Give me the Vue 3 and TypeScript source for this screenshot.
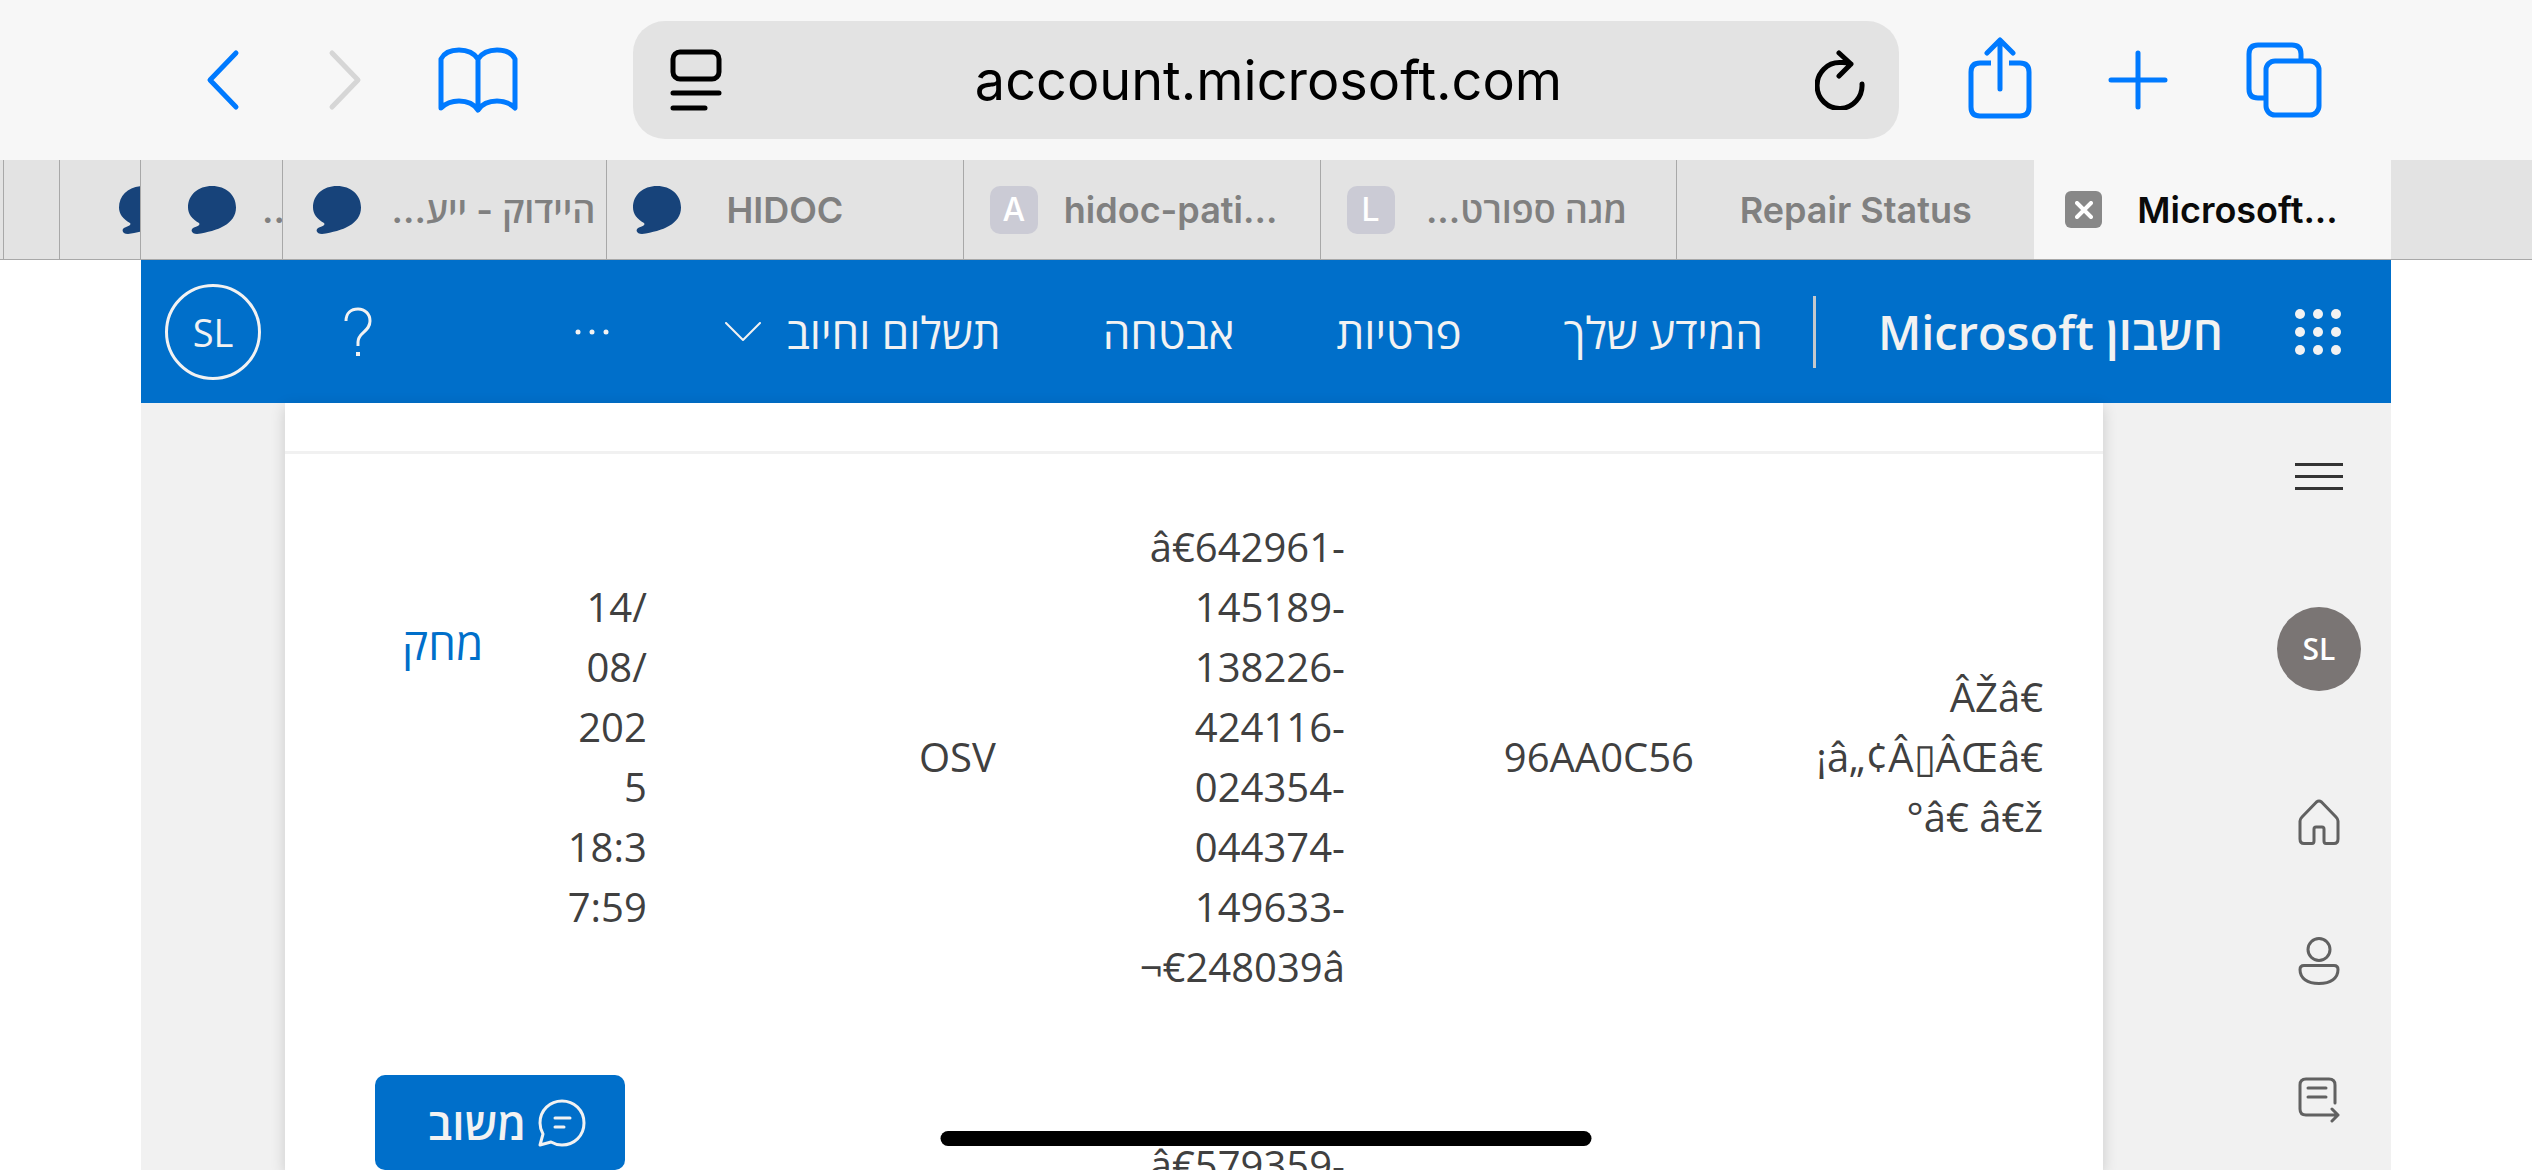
<script setup lang="ts">
interface Tab {
  title: string
  icon: 'bubble' | 'letter' | 'close' | 'none'
  letter?: string
  kind: string
  rtl?: boolean
}

interface RecoveryKey {
  device: string[]
  keyId: string
  key: string[]
  drive: string
  date: string[]
}

const tabs: Tab[] = [
  { title: '', icon: 'none', kind: 'sliver' },
  { title: '', icon: 'none', kind: 'narrow' },
  { title: '', icon: 'bubble', kind: 'tucked' },
  { title: '..', icon: 'bubble', kind: 'small' },
  { title: 'היידוק - ייע...', icon: 'bubble', kind: 'medium', rtl: true },
  { title: 'HIDOC', icon: 'bubble', kind: 'full short' },
  { title: 'hidoc-pati...', icon: 'letter', letter: 'A', kind: 'full' },
  { title: 'מגה ספורט...', icon: 'letter', letter: 'L', kind: 'full', rtl: true },
  { title: 'Repair Status', icon: 'none', kind: 'full plain' },
  { title: 'Microsoft...', icon: 'close', kind: 'full active' },
]

const links = ['המידע שלך', 'פרטיות', 'אבטחה']

const rows: RecoveryKey[] = [
  {
    device: ['ÂŽâ€', '¡â„¢Â▯ÂŒâ€', '°â€ â€ž'],
    keyId: '96AA0C56',
    key: ['â€642961-', '145189-', '138226-', '424116-', '024354-', '044374-', '149633-', '¬€248039â'],
    drive: 'OSV',
    date: ['14/', '08/', '202', '5', '18:3', '7:59'],
  },
  {
    device: [],
    keyId: '',
    key: ['â€579359-'],
    drive: '',
    date: [],
  },
]
</script>

<template>
  <div class="screen">
    <div class="toolbar">
      <button class="tool" aria-label="Back">
        <svg width="34" height="62" viewBox="0 0 34 62"><path d="M30 4 4 31 30 58" /></svg>
      </button>
      <button class="tool disabled forward" aria-label="Forward" disabled>
        <svg width="34" height="62" viewBox="0 0 34 62"><path d="M4 4 30 31 4 58" /></svg>
      </button>
      <button class="tool book" aria-label="Bookmarks">
        <svg width="80" height="66" viewBox="0 0 80 66">
          <path d="M40 12C36 6 29 3 21 3S6 6 3 12V61C7 57 13 54 21 54S36 57 40 63C44 57 51 54 59 54S73 57 77 61V12C74 6 67 3 59 3S44 6 40 12V62" />
        </svg>
      </button>
      <div class="address">
        <button class="tool dark" aria-label="Page settings">
          <svg width="52" height="62" viewBox="0 0 52 62">
            <rect x="3" y="3" width="46" height="27" rx="7" />
            <path d="M3 44H49M3 59H35" />
          </svg>
        </button>
        <input class="url" type="text" aria-label="Address" value="account.microsoft.com" />
        <button class="tool dark" aria-label="Reload">
          <svg width="50" height="60" viewBox="0 0 50 60">
            <path d="M47 34A22.5 23 0 1 1 25 12.500Q31 12 36 14M24 3 36 14 24 26" />
          </svg>
        </button>
      </div>
      <button class="tool share" aria-label="Share">
        <svg width="64" height="82" viewBox="0 0 64 82">
          <path class="flat" d="M23 26H12Q3 26 3 35V70Q3 79 12 79H52Q61 79 61 70V35Q61 26 52 26H41" />
          <path d="M32 52V4M19 16 32 3 45 16" />
        </svg>
      </button>
      <button class="tool plus" aria-label="New tab">
        <svg width="60" height="60" viewBox="0 0 60 60"><path d="M30 3V57M3 30H57" /></svg>
      </button>
      <button class="tool" aria-label="Show tabs">
        <svg width="76" height="76" viewBox="0 0 76 76">
          <path class="flat" d="M55 17V12Q55 3 46 3H12Q3 3 3 12V47Q3 56 12 56H18" />
          <rect x="20" y="19" width="53" height="54" rx="9" />
        </svg>
      </button>
    </div>

    <div class="tabbar">
      <div v-for="(tab, i) in tabs" :key="i" class="tab" :class="tab.kind">
        <svg v-if="tab.icon === 'bubble'" class="bubble" width="48" height="48" viewBox="0 0 48 48">
          <path d="M24 0C38 0 48 9 48 21.500C48 38 30 45 9 48C3 48 2 43 6 41.500C10 40 12.500 39 11 37C4 33 0 28 0 21.500C0 9 10 0 24 0Z" />
        </svg>
        <span v-else-if="tab.icon === 'letter'" class="letter">{{ tab.letter }}</span>
        <button v-else-if="tab.icon === 'close'" class="close" aria-label="Close tab">
          <svg width="18" height="18" viewBox="0 0 18 18"><path d="M2 2 16 16M16 2 2 16" /></svg>
        </button>
        <span v-if="tab.title" class="title" :dir="tab.rtl ? 'rtl' : 'ltr'">{{ tab.title }}</span>
      </div>
    </div>

    <div class="page" dir="rtl">
      <header class="header">
        <button class="plainbtn waffle" aria-label="Apps">
          <svg width="46" height="46" viewBox="0 0 46 46">
            <template v-for="r in 3" :key="r">
              <circle v-for="c in 3" :key="c" :cx="c * 18 - 13" :cy="r * 18 - 13" r="5" />
            </template>
          </svg>
        </button>
        <a class="brand" href="#">חשבון Microsoft</a>
        <span class="divider"></span>
        <nav class="links">
          <a v-for="link in links" :key="link" href="#">{{ link }}</a>
          <a class="menu" href="#">
            תשלום וחיוב
            <svg width="36" height="20" viewBox="0 0 36 20"><path d="M1 1 18 18 35 1" /></svg>
          </a>
        </nav>
        <button class="plainbtn more" aria-label="More">
          <svg width="34" height="6" viewBox="0 0 34 6">
            <circle cx="3" cy="3" r="2.500" /><circle cx="17" cy="3" r="2.500" /><circle cx="31" cy="3" r="2.500" />
          </svg>
        </button>
        <button class="plainbtn help" aria-label="Help">
          <svg width="28" height="50" viewBox="0 0 28 50">
            <path d="M2 14C2 6 7 2 14 2S26 7 26 14C26 25 14 25 14 35V39" />
            <rect x="12" y="45" width="4" height="4" />
          </svg>
        </button>
        <button class="plainbtn account">SL</button>
      </header>

      <div class="body">
        <aside class="rail">
          <button class="plainbtn" aria-label="Menu">
            <svg width="48" height="27" viewBox="0 0 48 27"><path d="M0 1.500H48M0 13.500H48M0 25.500H48" /></svg>
          </button>
          <a class="avatar" href="#">SL</a>
          <nav class="icons">
            <a href="#" aria-label="Home">
              <svg width="42" height="48" viewBox="0 0 42 48">
                <path d="M2 23Q2 21 4 19L18.500 4Q21 2 23.500 4L38 19Q40 21 40 23V41Q40 45.500 36 45.500H28Q26 45.500 26 43V31Q26 29 24 29H18Q16 29 16 31V43Q16 45.500 14 45.500H6Q2 45.500 2 41Z" />
              </svg>
            </a>
            <a href="#" aria-label="Your info">
              <svg width="42" height="48" viewBox="0 0 42 48">
                <circle cx="21" cy="12.500" r="11" />
                <path d="M6 28.500H36Q40 28.500 40 32.500C40 41 33 46.500 21 46.500S2 41 2 32.500Q2 28.500 6 28.500Z" />
              </svg>
            </a>
            <a href="#" aria-label="Subscriptions">
              <svg width="42" height="48" viewBox="0 0 42 48">
                <path d="M37 27V9Q37 3 31 3H8Q2 3 2 9V33Q2 39 8 39H40M34 33 40 39 34 45M10 12H28M10 21H28" />
              </svg>
            </a>
          </nav>
        </aside>

        <main class="card">
          <table class="keys">
            <colgroup>
              <col class="wide" /><col class="wide" /><col class="wide" /><col class="wide" /><col class="date" /><col />
            </colgroup>
            <tbody>
              <tr v-for="(row, i) in rows" :key="i">
                <td><span v-for="line in row.device" :key="line" class="line" dir="ltr">{{ line }}</span></td>
                <td>{{ row.keyId }}</td>
                <td><span v-for="line in row.key" :key="line" class="line" dir="ltr">{{ line }}</span></td>
                <td>{{ row.drive }}</td>
                <td><span v-for="line in row.date" :key="line" class="line" dir="ltr">{{ line }}</span></td>
                <td class="action"><a v-if="row.keyId" href="#">מחק</a></td>
              </tr>
            </tbody>
          </table>
        </main>
      </div>
    </div>

    <button class="feedback" dir="rtl">
      <svg width="48" height="48" viewBox="0 0 48 48">
        <path d="M24 2C36 2 46 11 46 24S36 46 24 46Q18 46 13 43L2 46 5 35Q2 30 2 24C2 11 12 2 24 2ZM17 19H32M17 28H26" />
      </svg>
      משוב
    </button>
    <div class="home-indicator"></div>
  </div>
</template>

<style>
body {
  margin: 0;
}
</style>

<style scoped>
.screen {
  position: relative;
  display: flex;
  flex-direction: column;
  height: 100vh;
  overflow: hidden;
  background: #fff;
  font-family: Inter, "Open Sans", sans-serif;
}

button {
  padding: 0;
  border: 0;
  background: none;
  font-family: inherit;
}

a {
  color: inherit;
  text-decoration: none;
}

svg {
  display: block;
  flex: none;
  fill: none;
  stroke: currentColor;
  stroke-linecap: round;
  stroke-linejoin: round;
}

.toolbar {
  display: flex;
  flex: none;
  align-items: center;
  height: 160px;
  padding: 0 210px 0 206px;
  box-sizing: border-box;
  background: #f7f7f7;
}

.tool {
  color: #007aff;
}

.tool svg {
  stroke-width: 5px;
}

.tool .flat {
  stroke-linecap: butt;
}

.disabled {
  color: #d6d6d6;
}

.forward {
  margin: 0 76px 0 88px;
}

.dark {
  color: #000;
}

.address {
  display: flex;
  flex: 1;
  align-items: center;
  height: 118px;
  margin: 0 69px 0 115px;
  padding: 0 34px 0 37px;
  border-radius: 32px;
  background: #e3e3e3;
}

.url {
  flex: 1;
  min-width: 0;
  padding: 0;
  border: 0;
  background: none;
  font-family: inherit;
  font-size: 54px;
  text-align: center;
  color: #000;
}

.share {
  padding-bottom: 4px;
}

.plus {
  margin: 0 78px 0 76px;
}

.tabbar {
  display: flex;
  flex: none;
  height: 100px;
  padding-right: 141px;
  box-sizing: border-box;
  border-bottom: 1px solid #a8a8a8;
  background: #e3e3e3;
}

.tab {
  display: flex;
  flex: none;
  align-items: center;
  gap: 26px;
  box-sizing: border-box;
  border-right: 1px solid #a8a8a8;
  overflow: hidden;
  font-size: 36px;
  font-weight: 600;
  color: #808080;
  white-space: nowrap;
}

.sliver {
  width: 4px;
}

.narrow {
  width: 56px;
}

.tucked {
  width: 81px;
  padding-left: 59px;
}

.small {
  width: 142px;
  padding-left: 47px;
}

.medium {
  width: 324px;
  padding: 0 6px 0 30px;
}

.full {
  flex: 1 1 300px;
  min-width: 0;
  padding: 0 44px 0 26px;
}

.short {
  padding-right: 100px;
}

.plain {
  padding: 0 26px;
  border-right: 0;
}

.active {
  padding: 0 44px 0 31px;
  border-right: 0;
  background: #f7f7f7;
  color: #0a0a0a;
}

.title {
  flex: 1;
  text-align: center;
}

.bubble {
  fill: #17437a;
  stroke: none;
}

.letter {
  flex: none;
  width: 48px;
  border-radius: 10px;
  background: #cbcbd5;
  font-size: 32px;
  font-weight: 500;
  line-height: 48px;
  text-align: center;
  color: #fff;
}

.close {
  display: flex;
  flex: none;
  align-items: center;
  justify-content: center;
  width: 37px;
  height: 37px;
  border-radius: 6px;
  background: #888;
  color: #fff;
}

.close svg {
  stroke-width: 4px;
}

.page {
  display: flex;
  flex: 1;
  flex-direction: column;
  min-height: 0;
  margin: 0 141px;
  background: #f1f1f1;
  font-family: "Open Sans", "Noto Sans", sans-serif;
}

.header {
  display: flex;
  flex: none;
  align-items: center;
  height: 143px;
  padding: 0 50px 0 24px;
  background: #006fca;
  font-size: 44px;
  color: #f2f2f2;
}

.plainbtn {
  color: inherit;
}

.waffle svg {
  fill: currentColor;
  stroke: none;
}

.brand {
  margin-right: 72px;
  font-size: 47px;
  font-weight: 600;
}

.divider {
  width: 3px;
  height: 72px;
  margin: 0 62px 0 50px;
  background: #c4c9cd;
}

.links {
  display: flex;
  gap: 102px;
}

.menu {
  display: flex;
  align-items: center;
  gap: 26px;
}

.menu svg {
  stroke-width: 2px;
}

.more {
  margin-right: 116px;
}

.more svg {
  fill: currentColor;
  stroke: none;
}

.help {
  margin-right: auto;
  margin-left: 83px;
}

.help svg {
  stroke-width: 3px;
  stroke-linecap: butt;
}

.help rect {
  fill: currentColor;
  stroke: none;
}

.account {
  width: 96px;
  height: 96px;
  box-sizing: border-box;
  border: 3px solid #f2f2f2;
  border-radius: 50%;
  font-size: 38px;
}

.body {
  display: flex;
  flex: 1;
  min-height: 0;
  padding-left: 144px;
}

.rail {
  display: flex;
  flex: none;
  flex-direction: column;
  align-items: center;
  width: 144px;
  margin-left: 144px;
  padding-top: 60px;
  box-sizing: border-box;
  color: #333;
}

.rail svg {
  stroke-width: 3px;
}

.avatar {
  width: 84px;
  margin: 117px 0 107px;
  border-radius: 50%;
  background: #7a7574;
  font-size: 30px;
  font-weight: 600;
  line-height: 84px;
  text-align: center;
  color: #fff;
}

.icons {
  display: flex;
  flex-direction: column;
  gap: 91px;
  color: #616161;
}

.card {
  flex: 1;
  min-width: 0;
  padding-top: 48px;
  background: #fff;
  box-shadow: 0 4px 14px rgba(0, 0, 0, 0.16);
}

.keys {
  width: 100%;
  border-top: 3px solid #f1f1f1;
  border-spacing: 0;
  table-layout: fixed;
  font-size: 40px;
  line-height: 60px;
  color: #404040;
}

.wide {
  width: 19.2%;
}

.date {
  width: 9%;
}

.keys td {
  padding: 63px 60px 57px 0;
  text-align: right;
  white-space: nowrap;
}

.line {
  display: block;
}

.keys .action {
  padding-top: 159px;
  font-size: 44px;
  vertical-align: top;
  color: #006fca;
}

.feedback {
  position: absolute;
  bottom: 0;
  left: 375px;
  display: flex;
  align-items: center;
  justify-content: center;
  gap: 12px;
  width: 250px;
  height: 95px;
  padding-left: 14px;
  border-radius: 10px;
  background: #006fca;
  font-family: "Open Sans", "Noto Sans", sans-serif;
  font-size: 44px;
  font-weight: 600;
  color: #f2f2f2;
}

.feedback svg {
  stroke-width: 3px;
}

.home-indicator {
  position: absolute;
  bottom: 24px;
  left: 50%;
  width: 651px;
  height: 15px;
  border-radius: 8px;
  background: #000;
  transform: translateX(-50%);
}
</style>
